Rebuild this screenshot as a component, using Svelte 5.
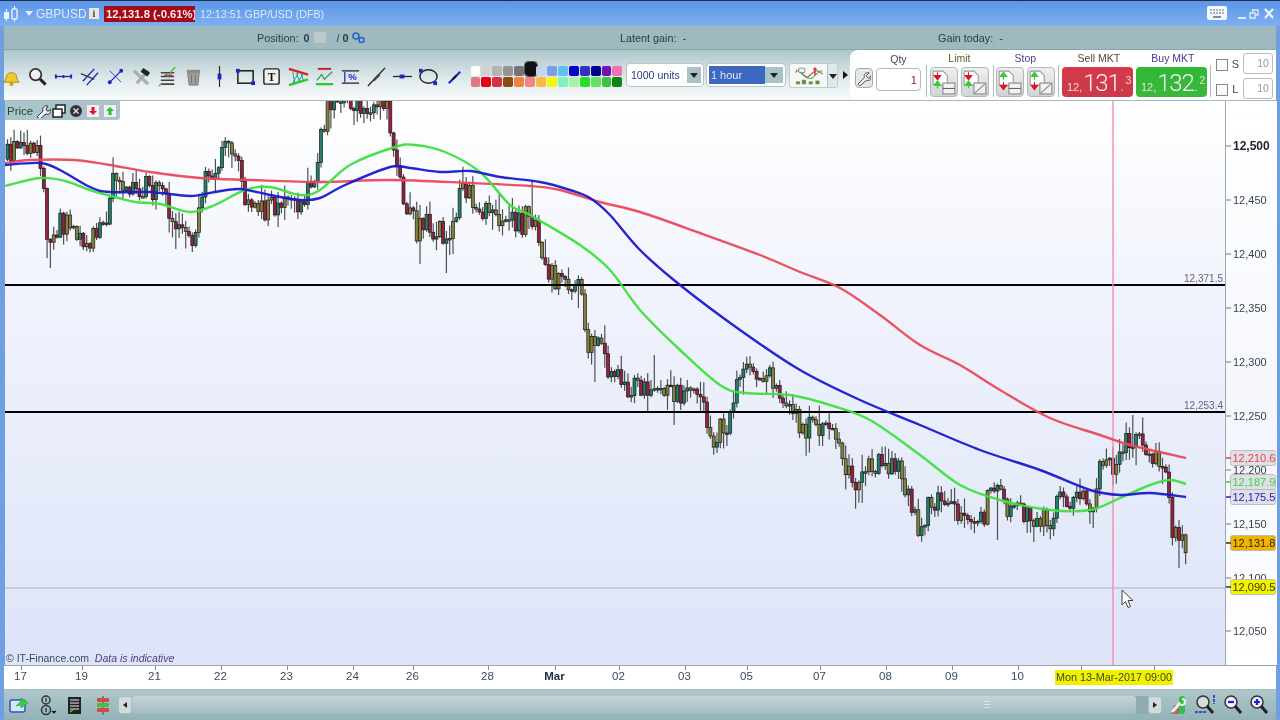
<script>
// price path picked off the chart, x/y in chart pixels
const W = 1220, H = 564, OX = 5, OY = 101;

const trace = [[5,160],[22,145],[38,150],[46,190],[48,235],[60,225],[75,225],[90,240],[105,230],[115,180],[130,185],[150,185],[165,195],[185,235],[195,240],[205,185],[225,150],[240,150],[248,200],[260,210],[280,205],[300,210],[315,180],[328,110],[335,95],[345,96],[378,108],[390,105],[395,150],[402,185],[418,230],[430,225],[445,235],[455,230],[465,180],[475,205],[495,215],[510,220],[525,225],[530,205],[540,235],[548,270],[560,282],[582,285],[587,340],[595,350],[603,345],[610,370],[625,385],[650,385],[670,395],[690,390],[705,405],[715,440],[730,420],[740,375],[750,365],[770,375],[785,395],[800,425],[815,430],[830,420],[845,460],[860,485],[870,465],[900,462],[910,495],[920,525],[935,500],[960,510],[985,520],[990,490],[1000,490],[1015,515],[1040,515],[1052,525],[1060,495],[1075,500],[1095,505],[1105,455],[1115,465],[1130,435],[1145,445],[1155,460],[1168,465],[1172,520],[1180,545],[1186,545]];

const spikes = [[48,268],[190,252],[418,264],[445,273],[578,308],[595,382],[652,355],[672,425],[716,453],[860,503],[918,537],[995,540],[1050,535],[1130,415],[1177,568],[530,180],[742,362]];

const red = [[5,163],[30,160],[75,160],[110,165],[150,172],[200,178],[250,180],[320,182],[390,180],[470,183],[530,186],[560,190],[600,202],[640,212],[700,233],[760,255],[800,272],[840,288],[880,315],[920,345],[960,365],[1000,390],[1050,418],[1100,435],[1130,445],[1186,458]];
const blue = [[5,165],[40,163],[60,170],[90,187],[110,192],[150,192],[190,196],[215,192],[240,189],[270,195],[300,200],[320,198],[345,185],[390,167],[410,168],[440,172],[470,171],[500,177],[540,182],[570,190],[590,198],[610,215],[640,250],[680,285],[740,330],[800,370],[860,400],[920,425],[980,450],[1040,470],[1090,490],[1120,495],[1150,493],[1186,497]];
const green = [[5,186],[40,178],[65,181],[90,190],[115,197],[135,202],[160,204],[190,212],[215,205],[245,190],[270,187],[300,195],[320,190],[350,165],[395,147],[415,145],[445,152],[480,172],[510,205],[530,215],[580,245],[610,270],[640,310],[680,350],[720,385],[745,393],[790,395],[830,405],[870,420],[920,455],[960,485],[1000,500],[1050,510],[1090,510],[1120,498],[1150,485],[1170,480],[1186,484]];

// catmull-rom through the picked points so the averages don't show corners
function smooth(list) {
  const p = list.map(([x, y]) => [x - OX, y - OY]);
  let d = `M${p[0][0]} ${p[0][1]}`;
  for (let i = 0; i < p.length - 1; i++) {
    const a = p[Math.max(i - 1, 0)], b = p[i], c = p[i + 1], e = p[Math.min(i + 2, p.length - 1)];
    d += `C${b[0] + (c[0] - a[0]) / 6} ${b[1] + (c[1] - a[1]) / 6} ${c[0] - (e[0] - b[0]) / 6} ${c[1] - (e[1] - b[1]) / 6} ${c[0]} ${c[1]}`;
  }
  return d;
}

function at(x) {
  for (let i = 1; i < trace.length; i++) {
    if (x <= trace[i][0]) {
      const [x0, y0] = trace[i - 1], [x1, y1] = trace[i];
      return y0 + (y1 - y0) * (x - x0) / (x1 - x0);
    }
  }
  return trace[trace.length - 1][1];
}

let seed = 17;
const rnd = () => (seed = (seed * 16807) % 2147483647) / 2147483647;

const candles = [];
let prev = at(6);
for (let x = 6; x < 1186; x += 3.3) {
  const close = at(x + 3.3) + (rnd() - 0.5) * 24;
  let hi = Math.min(prev, close) - rnd() * rnd() * 20 - 1;
  let lo = Math.max(prev, close) + rnd() * rnd() * 20 + 1;
  for (const [sx, sy] of spikes) {
    if (Math.abs(sx - x) < 1.7) {
      if (sy > lo) lo = sy;
      if (sy < hi) hi = sy;
    }
  }
  const up = close < prev;
  const tint = rnd() < 0.35 ? '#84823c' : up ? '#1f8068' : '#98203e';
  candles.push({ x: x - OX, top: Math.min(prev, close) - OY, h: Math.max(Math.abs(close - prev), 1.5), hi: hi - OY, lo: lo - OY, tint });
  prev = close;
}

const axis = [['12,500',146,true],['12,450',200],['12,400',254],['12,350',308],['12,300',362],['12,250',416],['12,200',470],['12,150',524],['12,100',578],['12,050',631]];
const days = [['17',21],['19',82],['21',155],['22',221],['23',287],['24',353],['26',413],['28',488],['Mar',555,true],['02',619],['03',685],['05',747],['07',820],['08',886],['09',952],['10',1018]];
const extraTicks = [1081, 1154];
const tags = [['12,210.6',458,'#e8404e','#dfe0e6'],['12,187.9',482,'#3fd43f','#dfe0e6'],['12,175.5',497,'#2020c8','#dfe0e6'],['12,131.8',543,'#33280a','#f0b400'],['12,090.5',587,'#3a3a00','#f2f200']];

const topColors = ['#fff','#d2d2d2','#b4b4b4','#949494','#747474','#111','#c6d2ee','#7c9fec','#62c0f0','#0000cc','#3232c2','#00008e','#7412b0','#f272b4'];
const lowColors = ['#e47484','#e20414','#d43244','#8a4c12','#f28240','#f28484','#f8ba42','#f8f800','#80f2c2','#a4f2a2','#22e222','#62e262','#42c242','#128212'];
</script>

<div class="app">
  <header class="title">
    <svg class="logo" width="20" height="18" viewBox="0 0 20 18">
      <rect x="2" y="7" width="5" height="7" fill="#dff"/><rect x="10" y="4" width="5" height="10" rx="1" fill="none" stroke="#eef" stroke-width="1.4"/>
      <path d="M12.5 1v3M12.5 14v3M4.5 4v3M4.500 14v2" stroke="#eef"/>
    </svg>
    <i class="caret"></i>
    <span class="sym">GBPUSD</span>
    <span class="info">i</span>
    <span class="last">12,131.8 (-0.61%)</span>
    <span class="clock">12:13:51 GBP/USD (DFB)</span>
    <span class="grow"></span>
    <svg width="20" height="15" viewBox="0 0 20 15">
      <rect x="0" y="0" width="20" height="14" rx="2" fill="#f4f8ff"/>
      <path d="M3 4h14M3 7h14" stroke="#8a9ab8" stroke-width="1.500" stroke-dasharray="2 1"/><path d="M6 11h8" stroke="#5a6a88" stroke-width="1.500"/>
    </svg>
    <svg class="winctl" width="46" height="14" viewBox="0 0 46 14">
      <path d="M8 11h8" stroke="#dfeafa" stroke-width="2"/>
      <path d="M20 6h5v5h-5zM22.500 6V3h5.500v5h-3" fill="none" stroke="#dfeafa" stroke-width="1.300"/>
      <path d="M35 2l8 9M43 2l-8 9" stroke="#eef4ff" stroke-width="2.200"/>
    </svg>
  </header>

  <section class="status">
    <div class="cell pos">
      <span>Position:</span><b>0</b>
      <span class="stub"></span>
      <span class="slash">/ <b>0</b></span>
      <svg width="14" height="12" viewBox="0 0 14 12"><circle cx="5" cy="4" r="3" fill="none" stroke="#2a62c8" stroke-width="1.600"/><circle cx="10.500" cy="8" r="2.500" fill="none" stroke="#2a62c8" stroke-width="1.600"/></svg>
    </div>
    <div class="cell lat">Latent gain:&nbsp; -</div>
    <div class="cell gain">Gain today:&nbsp; -</div>
  </section>

  <section class="toolbar">
    <div class="tools">
      <svg viewBox="0 0 22 22"><path d="M3 17c2-2 2-4 3-7 1-4 9-4 10 0 1 3 1 5 3 7z" fill="#f0c830" stroke="#b08a10"/><circle cx="11" cy="19" r="2" fill="#d0a018"/></svg>
      <svg viewBox="0 0 22 22"><circle cx="9" cy="9" r="6" fill="#eef2f2" stroke="#333" stroke-width="1.800"/><path d="M13.500 13.500l6 6" stroke="#222" stroke-width="3"/></svg>
      <svg viewBox="0 0 22 22"><path d="M3 11h16" stroke="#2222c8" stroke-width="1.400"/><path d="M3 9v4M19 9v4M11 9.500v3" stroke="#2222c8" stroke-width="2"/></svg>
      <svg viewBox="0 0 22 22"><path d="M4 16L16 3M8 20L20 7" stroke="#2222c8" stroke-width="1.400"/><path d="M2 8l14 6" stroke="#333" stroke-width="1.200"/></svg>
      <svg viewBox="0 0 22 22"><path d="M4 18L18 4" stroke="#2222c8" stroke-width="1.300"/><path d="M5 5l12 12" stroke="#2222c8" stroke-width=".8"/><circle cx="17" cy="5" r="2" fill="#2222c8"/><circle cx="5" cy="17" r="2" fill="#2222c8"/></svg>
      <svg viewBox="0 0 22 22"><path d="M3 5l15 14M6 18L18 5" stroke="#a8aeb0" stroke-width="3.400"/><path d="M13 2l7 5-3 4-7-5z" fill="#222"/></svg>
      <svg viewBox="0 0 22 22"><path d="M4 7h14M4 11h14M4 15h14M4 19h14" stroke="#444" stroke-width="1.600"/><path d="M8 10h8" stroke="#c02030" stroke-width="2"/><path d="M9 8l4 4" stroke="#2b6" stroke-width="1.400"/><path d="M14 7l5-6M2 21l3-3" stroke="#52c03a" stroke-width="1.500"/></svg>
      <svg viewBox="0 0 22 22"><path d="M5 7h12l-1.400 13H6.400z" fill="#a2a29a" stroke="#777"/><rect x="4" y="4" width="14" height="3" rx="1" fill="#8e8e86"/><path d="M9 9v9M13 9v9" stroke="#6f6f68"/></svg>
      <svg viewBox="0 0 22 22"><path d="M11 0v22" stroke="#222" stroke-width="1.200"/><rect x="9" y="8" width="4" height="6" fill="#2222c8"/></svg>
      <svg viewBox="0 0 22 22"><rect x="3" y="5" width="16" height="13" fill="none" stroke="#222" stroke-width="1.600"/><rect x="1" y="3" width="4" height="4" fill="#2222c8"/><rect x="17" y="16" width="4" height="4" fill="#2222c8"/></svg>
      <svg viewBox="0 0 22 22"><rect x="3" y="3" width="16" height="16" rx="2" fill="#f2f2ee" stroke="#222" stroke-width="1.500"/><text x="11" y="15.500" class="ic-t">T</text></svg>
      <svg viewBox="0 0 22 22"><path d="M1 3l20 6" stroke="#d82020" stroke-width="2.400"/><path d="M1 20l20-6" stroke="#2fc82f" stroke-width="2.400"/><path d="M5 6l2 12M9 7l3 10M14 8l2 7M5 18l6-11M11 16l5-8" stroke="#229a88"/></svg>
      <svg viewBox="0 0 22 22"><path d="M4 3h14" stroke="#c82020" stroke-width="2"/><path d="M2 19h18" stroke="#2fc82f" stroke-width="2.400"/><path d="M3 15l5-6 3 5 8-8" fill="none" stroke="#2a9a50" stroke-width="1.300"/></svg>
      <svg viewBox="0 0 22 22"><path d="M2 5h18M2 18h18" stroke="#222" stroke-width="1.300"/><text x="13" y="15" class="ic-p">%</text><path d="M5 6v11" stroke="#2222c8" stroke-width="1.300"/></svg>
      <svg viewBox="0 0 22 22"><path d="M2 21L20 2" stroke="#222" stroke-width="1.400"/><path d="M8 15l6-6" stroke="#444" stroke-width="2.600"/></svg>
      <svg viewBox="0 0 22 22"><path d="M1 11h20" stroke="#222" stroke-width="1.300"/><rect x="8" y="9" width="5" height="4" fill="#2222c8"/></svg>
      <svg viewBox="0 0 22 22"><ellipse cx="11" cy="11" rx="9" ry="7" fill="none" stroke="#222" stroke-width="1.500"/><rect x="1" y="3" width="4" height="4" fill="#2222c8"/><rect x="16" y="16" width="4" height="4" fill="#2222c8"/></svg>
      <svg viewBox="0 0 22 22"><path d="M5 18L17 6" stroke="#2222c8" stroke-width="2.200"/><path d="M9 14l4-4" stroke="#111" stroke-width="2"/></svg>
    </div>

    <div class="palette">
      {#each topColors as c, i}<i class:picked={i === 5} style="background:{c}"></i>{/each}
      {#each lowColors as c}<i style="background:{c}"></i>{/each}
    </div>

    <div class="select units"><span>1000 units</span><em></em></div>
    <div class="select hour"><span>1 hour</span><em></em></div>
    <div class="ind">
      <svg width="36" height="22" viewBox="0 0 36 26">
        <path d="M2 10c5-9 10 8 15 5s7-12 17-3" fill="none" stroke="#d04040" stroke-width="1.200"/>
        <path d="M3 7c6 2 8 9 15 10s10-10 16-9" fill="none" stroke="#48b048" stroke-width="1.200"/>
        <path d="M6 5h7v5H6z" fill="#f4f4f4" stroke="#888"/>
        <path d="M3 24v-3h4v3M10 24v-5h4v5M18 24v-3h4v3M26 24v-4h4v4" fill="#30b030" stroke="#c04040" stroke-width=".6"/>
        <path d="M25 4v9M23 6h4" stroke="#d04040" stroke-width="2"/>
      </svg>
      <em></em>
    </div>
    <span class="play"></span>

    <div class="deal">
      <button class="wrench" aria-label="Settings">
        <svg width="15" height="15" viewBox="0 0 16 16"><path d="M2 14l7-7c-1-3 1-6 5-5l-3 3 1 2 2 1 2-3c1 4-2 6-5 5l-7 6z" fill="#f0f0f0" stroke="#444"/></svg>
      </button>
      <div class="group">
        <label for="qty">Qty</label>
        <input id="qty" value="1" />
      </div>
      <i class="sep s1"></i>
      <div class="group">
        <span class="head lim">Limit</span>
        <div class="pair">
          {#each ['h','d'] as k}
            <button class="order" aria-label="Limit order">
              <svg width="24" height="25" viewBox="0 0 22 23">
                <path d="M1 1h9l4 4v9H1z" fill="#fff" stroke="#999"/>
                <path d="M5 2v4M2 5h6L5 9z" fill="#e01020" stroke="#e01020"/>
                <path d="M5 17v-4M2 14h6L5 10z" fill="#30d030" stroke="#30d030"/>
                <rect x="10" y="12" width="11" height="10" fill="#f2f2f2" stroke="#888"/>
                {#if k === 'h'}<path d="M10 17h11" stroke="#666"/>{:else}<path d="M11 21l9-8" stroke="#888"/>{/if}
              </svg>
            </button>
          {/each}
        </div>
      </div>
      <i class="sep s2"></i>
      <div class="group">
        <span class="head stp">Stop</span>
        <div class="pair">
          {#each ['h','d'] as k}
            <button class="order" aria-label="Stop order">
              <svg width="24" height="25" viewBox="0 0 22 23">
                <path d="M1 1h9l4 4v9H1z" fill="#fff" stroke="#999"/>
                <path d="M5 9V5M2 6h6L5 2z" fill="#30d030" stroke="#30d030"/>
                <path d="M5 11v4M2 14h6L5 18z" fill="#e01020" stroke="#e01020"/>
                <rect x="10" y="12" width="11" height="10" fill="#f2f2f2" stroke="#888"/>
                {#if k === 'h'}<path d="M10 17h11" stroke="#666"/>{:else}<path d="M11 21l9-8" stroke="#888"/>{/if}
              </svg>
            </button>
          {/each}
        </div>
      </div>
      <i class="sep s3"></i>
      <div class="group">
        <span class="head sell">Sell MKT</span>
        <div class="quote q-sell"><small>12,</small><strong>131</strong><small class="dot">.</small><sup>3</sup></div>
      </div>
      <div class="group">
        <span class="head buy">Buy MKT</span>
        <div class="quote q-buy"><small>12,</small><strong>132</strong><small class="dot">.</small><sup>2</sup></div>
      </div>
      <i class="sep s4"></i>
      <div class="sl">
        <div class="sl-row"><i class="box"></i><span>S</span><div class="mini">10</div></div>
        <div class="sl-row"><i class="box"></i><span>L</span><div class="mini">10</div></div>
      </div>
    </div>
  </section>

  <main class="plot">
    <div class="chart">
      <svg class="lines" width={W} height={H} viewBox="0 0 {W} {H}">
        <g class="wicks">
          {#each candles as c}
            <line x1={c.x + 1.5} x2={c.x + 1.5} y1={c.hi} y2={c.lo} />
          {/each}
        </g>
        {#each candles as c}
          <rect x={c.x} y={c.top} width="3" height={c.h} fill={c.tint} stroke="#1a1a1a" stroke-width=".7" />
        {/each}
        <line x1="0" x2={W} y1="184" y2="184" stroke="#000" stroke-width="2"/>
        <line x1="0" x2={W} y1="311" y2="311" stroke="#000" stroke-width="2"/>
        <line x1="0" x2={W} y1="487" y2="487" stroke="#a4aab4" stroke-width=".9"/>
        <line x1="1108" x2="1108" y1="0" y2={H} stroke="#f58cb0" stroke-width="1.400"/>
        <path d={smooth(red)} class="ma" stroke="#ea4a5c"/>
        <path d={smooth(green)} class="ma" stroke="#3ee03e"/>
        <path d={smooth(blue)} class="ma" stroke="#1a1acc"/>
        <text x="1218" y="181" class="lvl">12,371.5</text>
        <text x="1218" y="308" class="lvl">12,253.4</text>
      </svg>

      <div class="pricetab">
        <span>Price</span>
        <svg class="pw" width="16" height="14" viewBox="0 0 16 14"><path d="M2 13l6-6c-1-3 1-6 5-5l-2 3 1 2 2 0 2-2c0 4-2 6-5 5l-6 5z" fill="#eef" stroke="#333"/></svg>
        <svg width="14" height="14" viewBox="0 0 14 14"><rect x="4" y="1" width="9" height="8" fill="#fff" stroke="#222" stroke-width="1.500"/><rect x="1" y="5" width="9" height="8" fill="#fff" stroke="#222" stroke-width="1.500"/></svg>
        <svg width="14" height="14" viewBox="0 0 14 14"><circle cx="7" cy="7" r="6" fill="#333"/><path d="M4.500 4.500l5 5M9.500 4.500l-5 5" stroke="#ddd" stroke-width="1.500"/></svg>
        <svg width="14" height="14" viewBox="0 0 14 14"><rect x=".5" y=".5" width="13" height="13" fill="#eef" stroke="#bbb"/><path d="M7 11L3 7h2.500V3h3v4H11z" fill="#e01828"/></svg>
        <svg width="14" height="14" viewBox="0 0 14 14"><rect x=".5" y=".5" width="13" height="13" fill="#eef" stroke="#bbb"/><path d="M7 3l4 4H8.500v4h-3V7H3z" fill="#20c820"/></svg>
      </div>
      <div class="copy">© IT-Finance.com&nbsp; <em>Data is indicative</em></div>

      <svg class="pointer" width="14" height="20" viewBox="0 0 14 20"><path d="M1 1v15l3.500-3.500 2.500 6 2.500-1-2.500-6h5z" fill="#fff" stroke="#444"/></svg>
    </div>

    <aside class="prices">
      <svg width="51" height={H} viewBox="0 0 51 {H}">
        {#each axis as [label, y, strong]}
          <line x1="0" x2="5" y1={y - OY} y2={y - OY} stroke="#777"/>
          <text x="7" y={y - OY + 4} class="tick" class:strong>{label}</text>
        {/each}
        {#each tags as [label, y, ink, bg]}
          <rect x="4.500" y={y - OY - 7.500} width="45" height="15" rx="2" fill={bg} stroke="#b4b4b4" stroke-width=".8"/>
          <line x1="0" x2="5" y1={y - OY} y2={y - OY} stroke={ink} stroke-width="1.500"/>
          <text x="6.500" y={y - OY + 4} class="tick tag" style="fill:{ink}">{label}</text>
        {/each}
      </svg>
    </aside>
  </main>

  <div class="dates">
    {#each days as [label, x, strong]}
      <span class="day" class:strong style="left:{x}px">{label}</span>
      <i class="mark" style="left:{x}px"></i>
    {/each}
    {#each extraTicks as x}<i class="mark" style="left:{x}px"></i>{/each}
    <span class="now">Mon 13-Mar-2017 09:00</span>
  </div>

  <footer class="bottom">
    <svg width="22" height="22" viewBox="0 0 22 22"><rect x="2" y="6" width="15" height="12" rx="2" fill="#d8e8fa" stroke="#2a5ac0" stroke-width="1.500"/><path d="M8 12l5-5V4l7 5-7 5v-3z" fill="#3ccc4a" stroke="#2a9a36" stroke-width=".6"/></svg>
    <svg width="22" height="22" viewBox="0 0 22 22"><circle cx="10" cy="6" r="4" fill="none" stroke="#333" stroke-width="1.500"/><circle cx="10" cy="16" r="4.500" fill="none" stroke="#333" stroke-width="1.500"/><path d="M10 4v4M10 14v4M16 17l2 2 2-2" stroke="#222" stroke-width="1.200"/></svg>
    <svg width="22" height="22" viewBox="0 0 22 22"><rect x="4" y="3" width="13" height="17" fill="#222"/><path d="M6 6h9M6 9h9M6 12h9M6 15h9" stroke="#eee"/><path d="M6 18l4-3" stroke="#3ccc4a" stroke-width="1.500"/></svg>
    <svg width="22" height="22" viewBox="0 0 22 22"><path d="M11 2v19" stroke="#444"/><rect x="5" y="4" width="12" height="4" rx="1" fill="#d8484a"/><rect x="5" y="9" width="12" height="4" rx="1" fill="#3cc04a"/><rect x="5" y="14" width="12" height="4" rx="1" fill="#d8484a"/></svg>
    <div class="scroll">
      <span class="sb"><i class="left"></i></span>
      <div class="track"><div class="thumb"><span>☰</span></div></div>
      <span class="sb"><i class="right"></i></span>
    </div>
    <div class="zooms">
      <svg width="22" height="22" viewBox="0 0 22 22"><path d="M3 20l3-9 7 1-2 8z" fill="#b85048" opacity=".8"/><path d="M4 18L14 7" stroke="#eee" stroke-width="3"/><rect x="11" y="2" width="6" height="18" rx="3" fill="#2ec040"/><path d="M14 5a3 3 0 1 1-3 3" fill="none" stroke="#eee" stroke-width="2"/></svg>
      <svg width="24" height="22" viewBox="0 0 24 22"><circle cx="9" cy="8" r="6" fill="#d8dcd8" stroke="#333" stroke-width="1.500"/><path d="M13 12l6 7" stroke="#222" stroke-width="3"/><path d="M20 1v9M1 18h12" stroke="#2222c8" stroke-width="1.500" stroke-dasharray="3 1"/></svg>
      <svg width="22" height="22" viewBox="0 0 22 22"><circle cx="9" cy="8" r="6" fill="#eef" stroke="#333" stroke-width="1.500"/><path d="M6 8h6" stroke="#2222c8" stroke-width="2.200"/><path d="M13 12l6 7" stroke="#222" stroke-width="3"/></svg>
      <svg width="22" height="22" viewBox="0 0 22 22"><circle cx="9" cy="8" r="6" fill="#eef" stroke="#333" stroke-width="1.500"/><path d="M6 8h6M9 5v6" stroke="#2222c8" stroke-width="2.200"/><path d="M13 12l6 7" stroke="#222" stroke-width="3"/></svg>
    </div>
  </footer>
</div>

<style>
:global(body) { margin: 0; background: #6f9fe0; }

.app {
  width: 1280px;
  height: 720px;
  overflow: hidden;
  display: flex;
  flex-direction: column;
  font-family: "Liberation Sans", Arial, sans-serif;
  font-size: 12px;
  color: #2c3c48;
  filter: blur(0.35px);
  background: #6f9fe0;
}

.title {
  height: 26px;
  flex: none;
  box-sizing: border-box;
  border-top: 1px solid #24324e;
  display: flex;
  align-items: center;
  padding: 0 4px 0 2px;
  background: linear-gradient(#5c96e8, #7eb0f0);
  color: #dce9fb;
}
.logo { margin-right: 3px; }
.caret { border: 4px solid transparent; border-top: 5px solid #e4eefc; border-bottom: 0; margin-right: 3px; }
.sym { width: 50px; }
.info { width: 10px; height: 11px; background: #e8e8e0; color: #444; font: bold 10px/11px "Liberation Serif", serif; text-align: center; margin: 0 5px 0 3px; }
.last { background: #a30a18; color: #f8e8e8; font-weight: bold; font-size: 11.300px; padding: 0 2px; box-sizing: border-box; width: 91px; white-space: nowrap; margin-right: 5px; height: 16px; line-height: 16px; overflow: hidden; }
.clock { font-size: 10.700px; }
.grow { flex: 1; }
.winctl { margin-left: 3px; }

.status {
  height: 24px;
  flex: none;
  margin: 0 4px;
  display: grid;
  grid-template-columns: 363px 318px 1fr;
  padding-left: 253px;
  align-items: center;
  background: #9eb9bf;
  border-bottom: 1px solid #8aa6ac;
  font-size: 10.800px;
  box-sizing: border-box;
}
.cell { display: flex; align-items: center; gap: 5px; }
.stub { width: 12px; height: 11px; background: #bdc8c8; margin-right: 5px; }
.slash { margin-right: -2px; }

.toolbar {
  height: 51px;
  flex: none;
  margin: 0 4px;
  display: flex;
  align-items: center;
  background: linear-gradient(#afc7cc, #e0eaec 60%, #fafcfc);
  border-bottom: 1px solid #a9b8bc;
  box-sizing: border-box;
  position: relative;
}
.tools { display: flex; width: 466px; margin-left: -6px; flex: none; padding-top: 2px; }
.tools svg { width: 21px; height: 21px; flex: none; margin: 0 2.550px; }
.ic-t { font: bold 12px "Liberation Serif", serif; text-anchor: middle; fill: #111; }
.ic-p { font: bold 10px "Liberation Sans", sans-serif; text-anchor: middle; fill: #2222c8; }

.palette { display: grid; grid-template-columns: repeat(14, 10.930px); grid-auto-rows: 11px; margin: 3px 0 0 6px; flex: none; }
.palette i { display: block; margin: .5px; border-radius: 2px; height: 10px; position: relative; }
.palette .picked { outline: 1.500px solid #555; border-radius: 3px; height: 14px; margin: -4px 0 0 0; width: 12px; }

.select { height: 24px; box-sizing: border-box; display: flex; align-items: center; background: #fff; border: 1px solid #b8c4c6; border-radius: 4px; padding: 2px; flex: none; }
.select span { flex: 1; line-height: 18px; padding-left: 2px; font-size: 10.600px; white-space: nowrap; }
.select em { width: 14px; height: 16px; background: #a8c2c8; position: relative; flex: none; }
.select em::after, .ind em::after { content: ""; position: absolute; left: 3px; top: 6px; border: 4px solid transparent; border-top: 5px solid #222; border-bottom: 0; }
.units { width: 78px; margin-left: 3px; color: #2a3a80; }
.hour { width: 80px; margin-left: 2px; }
.hour span { background: #3c68c0; color: #dbe6fa; font-size: 11px; }
.hour em { width: 18px; }
.hour em::after { left: 5px; }
.ind { width: 49px; height: 25px; margin-left: 3px; flex: none; display: flex; align-items: center; box-sizing: border-box; border: 1px solid #c0cccc; border-radius: 3px; background: #f4f8f8; overflow: hidden; }
.ind svg { flex: none; margin-left: 1px; }
.ind em { flex: 1; height: 100%; position: relative; background: #dde8ea; border-left: 1px solid #bbb; }
.ind em::after { left: 1px; top: 10px; }
.play { flex: none; margin: 0 0 0 5px; border: 4px solid transparent; border-left: 5px solid #111; border-right: 0; }

.deal {
  flex: 1;
  height: 50px;
  margin-left: 2px;
  display: flex;
  align-items: flex-end;
  padding: 0 0 3px 5px;
  box-sizing: border-box;
  background: #fff;
  border-radius: 8px 0 0 8px;
  position: relative;
  align-self: flex-start;
}
.wrench { width: 18px; height: 20px; padding: 0; margin: 0 3px 9px 0; border: 1px solid #aaa; border-radius: 4px; background: #e4e8e8; display: flex; align-items: center; justify-content: center; flex: none; }
.group { display: flex; flex-direction: column; align-items: center; flex: none; }
.group label, .head { font-size: 10.500px; line-height: 12px; height: 15px; color: #445; }
.group input { width: 45px; height: 23px; box-sizing: border-box; border: 1px solid #b8b8b8; border-radius: 4px; margin: 0 0 6px 0; padding: 0 3px; text-align: right; font: 11px "Liberation Sans", sans-serif; color: #a01818; background: #fff; }
.sep { width: 1px; height: 32px; background: #b0bcbc; flex: none; align-self: flex-end; }
.s1 { margin: 0 3px 0 5px; }
.s2 { margin: 0 2px 0 4px; }
.s3 { margin: 0 3px 0 3px; }
.s4 { margin: 0 5px 0 0; }
.pair { display: flex; gap: 3px; }
.order { width: 28px; height: 30px; padding: 0; border: 1px solid #b4b8b8; border-radius: 4px; background: linear-gradient(#eef0f0, #cfd4d4); display: flex; align-items: center; justify-content: center; }
.lim { color: #4c6a20; }
.stp { color: #50458a; }
.sell { color: #5a4440; }
.buy { color: #4a3a88; }
.quote { width: 71px; height: 30px; box-sizing: border-box; border-radius: 4px; color: #f8f0f0; display: flex; align-items: baseline; padding-left: 5px; line-height: 32px; margin-right: 3px; white-space: nowrap; }
.quote small { font-size: 11px; margin-right: 1px; opacity: .85; }
.quote strong { font: 300 24px/32px "Roboto", "Liberation Sans", sans-serif; letter-spacing: -1.200px; }
.quote .dot { margin: 0 2px 0 1px; }
.quote sup { font-size: 10.500px; line-height: 11px; position: relative; top: -7px; opacity: .85; vertical-align: baseline; }
.q-sell { background: linear-gradient(#d63a4c, #c93a48); }
.q-buy { background: linear-gradient(#2fb835, #3cb73e); }
.sl { display: flex; flex-direction: column; gap: 4px; margin-bottom: -2px; flex: none; }
.sl-row { display: flex; align-items: center; font-size: 11px; color: #444; height: 21px; }
.box { width: 12px; height: 12px; box-sizing: border-box; border: 1px solid #888; background: #fafafa; display: block; margin-top: 2px; }
.sl-row span { width: 15px; text-align: center; }
.mini { width: 30px; height: 21px; box-sizing: border-box; border: 1px solid #bbb; border-radius: 3px; text-align: right; padding: 2px 3px; font-size: 10.500px; color: #999; line-height: 15px; }

.plot { flex: none; height: 564px; margin-left: 5px; margin-right: 4px; display: flex; }
.chart { position: relative; width: 1220px; height: 564px; background: linear-gradient(#fff, #f0f3fc 35%, #dde4f8); border-right: 1px solid #9aa8b0; box-sizing: content-box; overflow: hidden; flex: none; }
.lines { display: block; }
.wicks line { stroke: #4c5054; stroke-width: 1.200; }
.ma { fill: none; stroke-width: 2.400; stroke-linejoin: round; opacity: .95; }
.lvl { font: 10px "Liberation Sans", sans-serif; fill: #6a6080; text-anchor: end; }

.pricetab { position: absolute; left: 0; top: 0; width: 115px; height: 19px; background: #a9c4ca; border-radius: 0 0 3px 0; display: flex; align-items: center; gap: 3px; padding-left: 2px; box-sizing: border-box; font-size: 11.500px; color: #264a30; }
.pw { margin-right: -2px; margin-left: -1px; }
.copy { position: absolute; left: 1px; bottom: 1px; font-size: 10.500px; color: #3c4860; }
.copy em { color: #4c3c78; }
.pointer { position: absolute; left: 1116px; top: 488px; }

.prices { flex: 1; background: linear-gradient(#fff, #f4f6fd 60%, #fff); }
.prices svg { display: block; }
.tick { font: 11px "Liberation Sans", sans-serif; fill: #3a4250; }
.tick.strong { font: bold 12px "Liberation Sans", sans-serif; fill: #1c2430; }

.dates { flex: none; height: 25px; margin: 0 4px; background: #fff; position: relative; border-bottom: 1px solid #a8b8bc; box-sizing: border-box; border-top: 1px solid #9aa8b0; }
.day { position: absolute; top: 4px; transform: translateX(-4.500px) translateX(-50%); font-size: 11.500px; color: #3a4a60; }
.day.strong { font-weight: bold; color: #20304a; }
.mark { position: absolute; top: 0; width: 1px; height: 4px; margin-left: -4px; background: #889; }
.now { position: absolute; left: 1051px; top: 4px; height: 15px; line-height: 15px; box-sizing: border-box; background: #f0f000; color: #3a4a20; font-size: 10.800px; white-space: nowrap; width: 118px; text-align: center; overflow: hidden; }

.bottom { flex: 1; margin: 0 4px; display: flex; align-items: center; gap: 6px; padding-left: 4px; background: linear-gradient(#aec7cb, #93b2b8); }
.scroll { width: 1044px; height: 18px; display: flex; flex: none; margin-left: -2px; }
.sb { width: 14px; flex: none; background: #d0dcdc; border: 1px solid #a8bcc0; border-radius: 3px; display: flex; align-items: center; justify-content: center; box-sizing: border-box; }
.sb i { border: 3.500px solid transparent; }
.sb .left { border-right: 4px solid #222; border-left: 0; }
.sb .right { border-left: 4px solid #222; border-right: 0; }
.track { flex: 1; background: #8fabb1; display: flex; }
.thumb { width: 1004px; height: 100%; box-sizing: border-box; background: linear-gradient(#c2d4d8, #a2bcc2); border-radius: 3px; display: flex; align-items: center; justify-content: flex-end; padding-right: 145px; }
.thumb span { font-size: 9px; color: #e2ecec; }
.zooms { display: flex; gap: 4px; flex: none; }
</style>
